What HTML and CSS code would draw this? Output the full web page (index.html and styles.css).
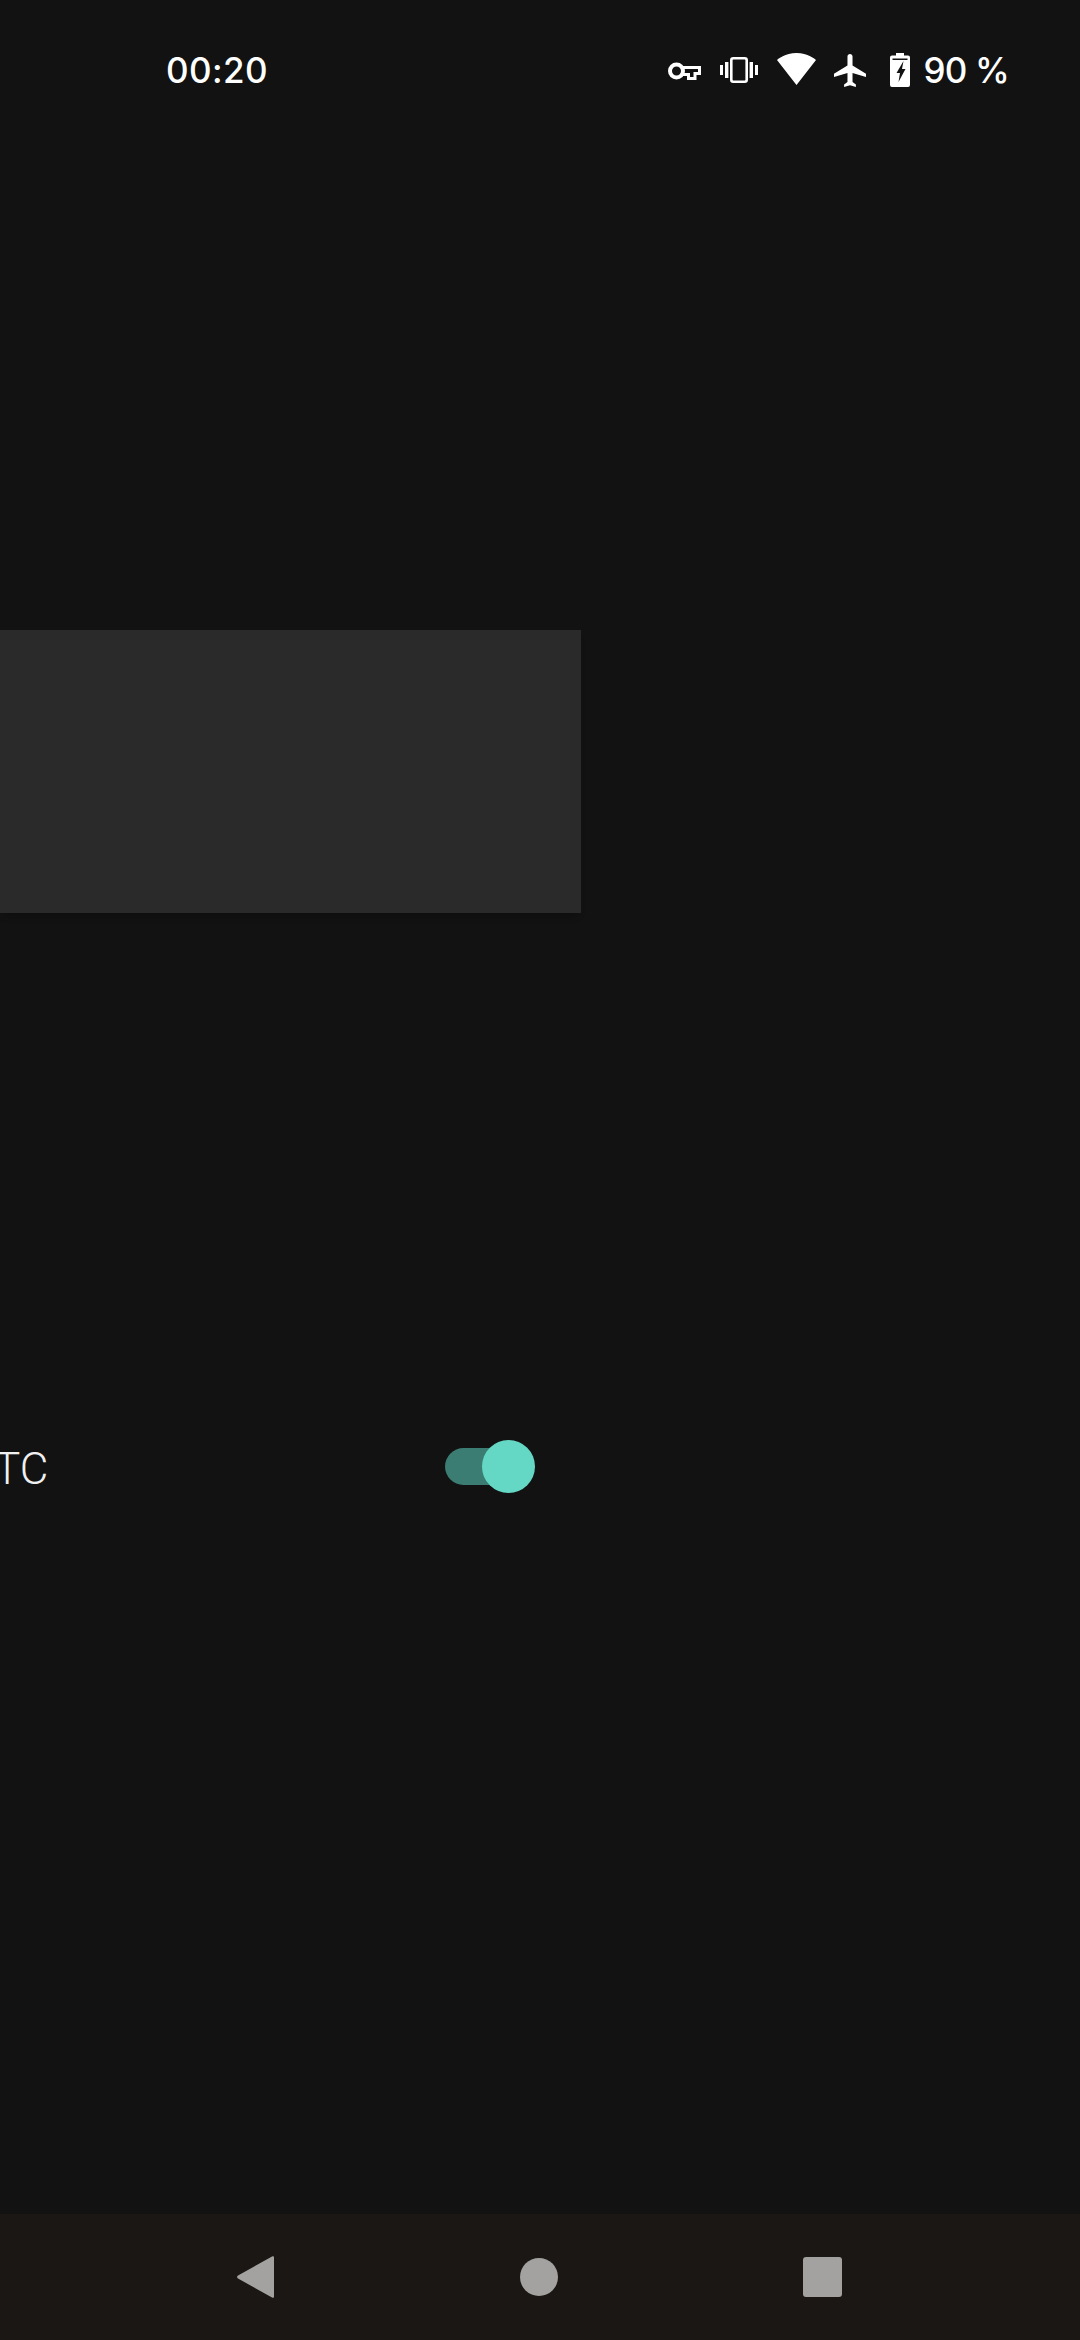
FILE: index.html
```html
<!DOCTYPE html>
<html>
<head>
<title>Settings</title>
<meta charset="utf-8">
<link rel="stylesheet" href="styles.css">
</head>
<body>

<div class="page">
    <div class="status">
        <span class="time">00:20</span>
        <div class="icons">
            <svg class="ic-key" viewBox="0 0 33 18"><circle cx="8.500" cy="9" r="6.500" fill="none" stroke="#fff" stroke-width="4"/><path d="M14 5.500H31.500V11.500H27V16.500H20.500V12.500H14" fill="none" stroke="#fff" stroke-width="3"/></svg>
            <svg class="ic-vib" viewBox="0 0 38 26"><path fill="#fff" d="M0 8h3v10H0zM5 5h3.400v16H5zM29.600 5H33v16h-3.400zM35 8h3v10h-3z"/><rect x="11.300" y="1.300" width="15.400" height="23.400" rx="2" fill="none" stroke="#fff" stroke-width="2.600"/></svg>
            <svg class="ic-wifi" viewBox="0.36 3 23.28 18.5" preserveAspectRatio="none"><path fill="#fff" d="M12.01 21.49L23.64 7c-.45-.34-4.93-4-11.64-4C5.28 3 .81 6.66.36 7l11.63 14.49.01.01.01-.01z"/></svg>
            <svg class="ic-plane" viewBox="2 2 19 20" preserveAspectRatio="none"><path fill="#fff" d="M21 16v-2l-8-5V3.500c0-.83-.67-1.500-1.500-1.500S10 2.670 10 3.500V9l-8 5v2l8-2.500V19l-2 1.500V22l3.500-1 3.500 1v-1.500L13 19v-5.500l8 2.500z"/></svg>
            <svg class="ic-bat" viewBox="0 0 20 34"><path fill="#fff" fill-rule="evenodd" d="M6 0h8v2.500h4a2 2 0 0 1 2 2V32a2 2 0 0 1-2 2H2a2 2 0 0 1-2-2V4.500a2 2 0 0 1 2-2h4zM2.500 5.500v1.500h15V5.500zM13.500 8L6.500 20h3.500l-1.500 9 7-13h-3.500z"/></svg>
            <span class="pct">90 %</span>
        </div>
    </div>

    <div class="card"></div>

    <div class="row">
        <span class="row-label">TC</span>
        <div class="switch"><div class="track"></div><div class="thumb"></div></div>
    </div>

    <div class="spacer"></div>

    <div class="nav">
        <svg class="nav-back" viewBox="0 0 37 42"><path fill="#a3a2a0" d="M35 .5c1-.7 2-.2 2 1v39c0 1.200-1 1.700-2 1L1 22.500c-1.300-.8-1.300-2.200 0-3z"/></svg>
        <div class="nav-home"></div>
        <div class="nav-recent"></div>
    </div>
</div>

</body>
</html>
```

FILE: styles.css
```css
*{margin:0;padding:0;box-sizing:border-box;}
html,body{width:1080px;height:2340px;overflow:hidden;background:#121212;}
.page{width:1080px;height:2340px;display:flex;flex-direction:column;font-family:"Inter","Roboto",sans-serif;color:#fff;overflow:hidden;}

.status{height:100px;flex:none;display:flex;align-items:center;justify-content:space-between;padding:40px 71px 0 166px;}
.time{font-size:35px;font-weight:500;line-height:40px;letter-spacing:.4px;}
.icons{display:flex;align-items:center;}
.icons svg{display:block;flex:none;}
.ic-key{width:33px;height:18px;margin-right:19px;margin-top:2px;}
.ic-vib{width:38px;height:26px;margin-right:19px;}
.ic-wifi{width:39px;height:32px;margin-right:18px;margin-top:-2px;}
.ic-plane{width:32px;height:33px;margin-right:24px;}
.ic-bat{width:20px;height:34px;margin-right:13px;}
.pct{font-size:35px;font-weight:500;line-height:40px;letter-spacing:-.8px;}

.card{width:581px;height:283px;margin-top:530px;flex:none;background:#2a2a2a;box-shadow:0 6px 8px -4px rgba(0,0,0,.3);}

.row{width:535px;margin-top:527px;flex:none;display:flex;align-items:flex-start;justify-content:space-between;}
.row-label{font-family:"Roboto",sans-serif;font-weight:300;font-size:44px;line-height:53px;margin:3px 0 0 -6px;color:#f0f0f0;}
.switch{width:90px;height:53px;position:relative;}
.track{width:65px;height:37px;margin-top:8px;border-radius:19px;background:#3b7d72;}
.thumb{position:absolute;top:0;right:0;width:53px;height:53px;border-radius:50%;background:#64d8c4;}

.spacer{flex:1;}
.nav{height:126px;flex:none;background:#1a1714;display:flex;align-items:center;padding:0 238px 0 237px;justify-content:space-between;}
.nav-back{width:37px;height:42px;display:block;}
.nav-home{width:38px;height:38px;border-radius:50%;background:#a3a2a0;}
.nav-recent{width:39px;height:40px;border-radius:3px;background:#a3a2a0;}
```
